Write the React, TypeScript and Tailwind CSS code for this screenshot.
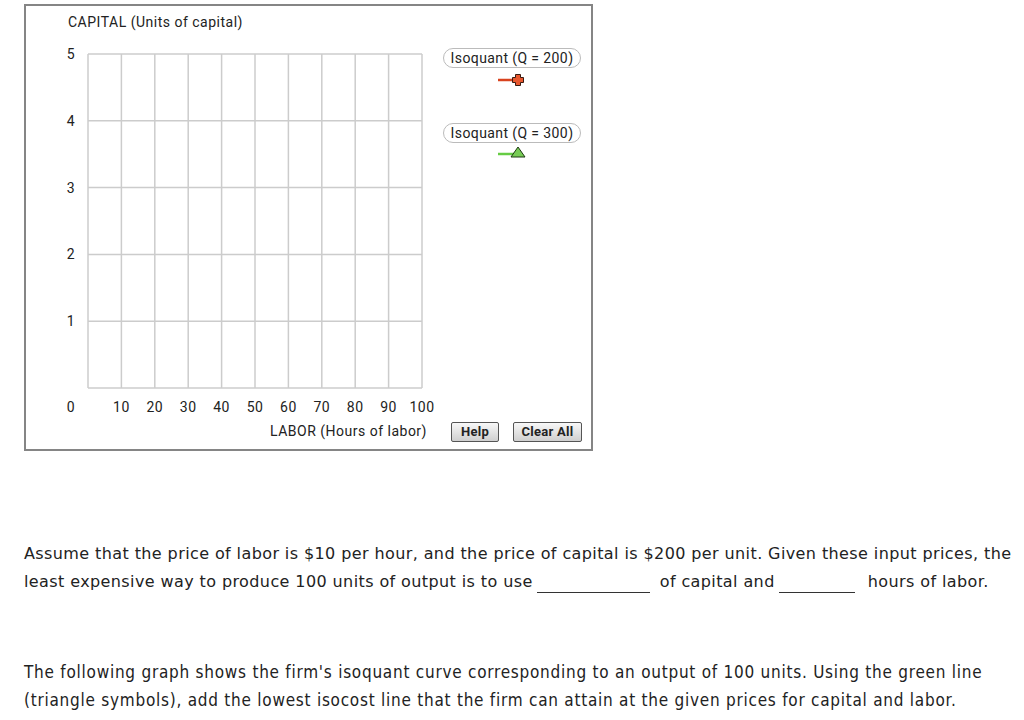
const XS = [10, 20, 30, 40, 50, 60, 70, 80, 90, 100];
const YS = [5, 4, 3, 2, 1];

const GX = 28;
const GY = 10;
const CW = 33.4;
const CH = 66.8;

const Chart = () => (
    <svg width="380" height="374" className="block" style={{ fontFamily: "Roboto, sans-serif", letterSpacing: "0.5px" }}>
        {Array.from({ length: 11 }).map((_, i) => (
            <line key={"v" + i} x1={GX + i * CW} y1={GY} x2={GX + i * CW} y2={GY + 5 * CH} stroke="#cccccc" strokeWidth="1.5" />
        ))}
        {Array.from({ length: 6 }).map((_, i) => (
            <line key={"h" + i} x1={GX} y1={GY + i * CH} x2={GX + 10 * CW} y2={GY + i * CH} stroke="#cccccc" strokeWidth="1.5" />
        ))}
        {YS.map((y, i) => (
            <text key={y} x="11" y={GY + i * CH} textAnchor="middle" dominantBaseline="central" fontSize="14" fill="#222">
                {y}
            </text>
        ))}
        <text x="11" y="363" textAnchor="middle" dominantBaseline="central" fontSize="14" fill="#222">
            0
        </text>
        {XS.map((x, i) => (
            <text key={x} x={GX + (i + 1) * CW} y="363" textAnchor="middle" dominantBaseline="central" fontSize="14" fill="#222">
                {x}
            </text>
        ))}
    </svg>
);

const CrossMark = () => (
    <svg width="40" height="16" className="block">
        <line x1="2" y1="8" x2="18" y2="8" stroke="#d8431f" strokeWidth="2.5" />
        <path d="M19.5 2.5h5v3h3v5h-3v3h-5v-3h-3v-5h3z" fill="#e8572e" stroke="#3a1a10" strokeWidth="1" />
    </svg>
);

const TriMark = () => (
    <svg width="40" height="16" className="block">
        <line x1="2" y1="10" x2="18" y2="10" stroke="#66cc44" strokeWidth="2.5" />
        <path d="M22 3l7 10h-14z" fill="#77cc55" stroke="#1d3a12" strokeWidth="1" />
    </svg>
);

const Pill = ({ text }: { text: string }) => (
    <div className="w-[138px] h-[20px] rounded-full border border-[#bbbbbb] flex items-center justify-center text-[14px] tracking-[0.4px] text-[#222]">
        {text}
    </div>
);

const Btn = ({ text, w }: { text: string; w: string }) => (
    <button
        className={`${w} h-[20px] border border-[#555] rounded-[2px] bg-gradient-to-b from-[#f8f8f8] to-[#cfcfcf] text-[13px] font-bold tracking-[0.3px] text-[#222] flex items-center justify-center`}
    >
        {text}
    </button>
);

const Blank = ({ w, ml }: { w: string; ml: string }) => (
    <span className={`inline-block ${w} ${ml} border-b border-[#333] h-[18px] align-[-6px]`} />
);

export default function App() {
    return (
        <div className="w-[1024px] h-[720px] bg-white overflow-hidden">
            <div className="ml-[24px] mt-[4px] w-[569px] h-[447px] border-2 border-[#858585] flex flex-col" style={{ fontFamily: "Roboto, sans-serif" }}>
                <div className="flex">
                    <div className="w-[414px] flex flex-col">
                        <div className="pl-[42px] pt-[7px] h-[38px] text-[14px] tracking-[0.5px] text-[#222] leading-[18px]">CAPITAL (Units of capital)</div>
                        <div className="pl-[34px]">
                            <Chart />
                        </div>
                    </div>
                    <div className="flex flex-col pl-[3px] pt-[42px]">
                        <Pill text="Isoquant (Q = 200)" />
                        <div className="pl-[53px] mt-[4px]">
                            <CrossMark />
                        </div>
                        <div className="mt-[35px]">
                            <Pill text="Isoquant (Q = 300)" />
                        </div>
                        <div className="pl-[53px] mt-[1px]">
                            <TriMark />
                        </div>
                    </div>
                </div>
                <div className="flex items-center justify-end pr-[9px] mt-[3px]">
                    <span className="text-[14px] tracking-[0.5px] text-[#222] mr-[24px]">LABOR (Hours of labor)</span>
                    <Btn text="Help" w="w-[48px]" />
                    <div className="w-[14px]" />
                    <Btn text="Clear All" w="w-[69px]" />
                </div>
            </div>

            <p className="ml-[24px] mt-[89px] text-[16px] tracking-[0.4px] leading-[28px] text-[#222]" style={{ fontFamily: "'DejaVu Sans', Verdana, sans-serif" }}>
                Assume that the price of labor is $10 per hour, and the price of capital is $200 per unit. Given these input prices, the
                <br />
                <span>least expensive way to produce 100 units of output is to use</span>
                <Blank w="w-[113px]" ml="ml-[4px]" />
                <span className="ml-[10px]">of capital and</span>
                <Blank w="w-[76px]" ml="ml-[4px]" />
                <span className="ml-[13px]">hours of labor.</span>
            </p>

            <p className="ml-[24px] mt-[62px] text-[17px] tracking-[0.75px] leading-[28px] text-[#222]" style={{ fontFamily: "'DejaVu Sans Condensed', 'DejaVu Sans', sans-serif" }}>
                The following graph shows the firm's isoquant curve corresponding to an output of 100 units. Using the green line
                <br />
                (triangle symbols), add the lowest isocost line that the firm can attain at the given prices for capital and labor.
            </p>
        </div>
    );
}
